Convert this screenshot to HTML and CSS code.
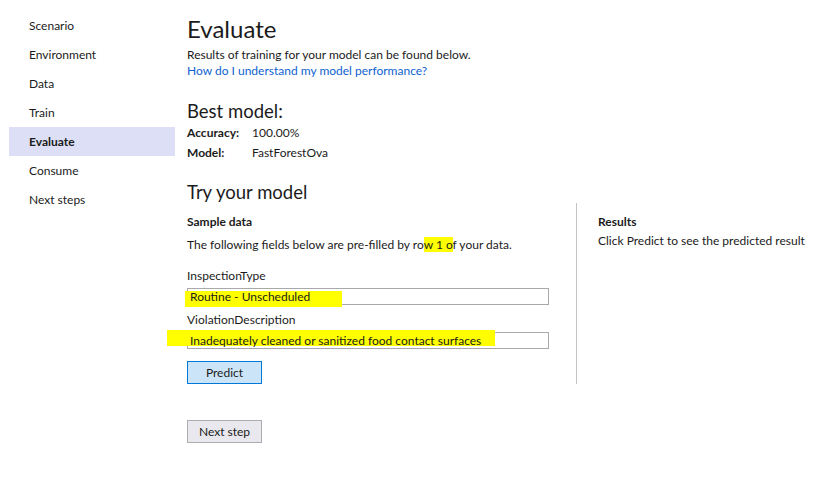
FILE: index.html
```html
<!DOCTYPE html>
<html>
<head>
<meta charset="utf-8">
<link rel="stylesheet" href="styles.css">
</head>
<body>
<div class="app">
  <nav class="sidebar">
    <div class="nav-item">Scenario</div>
    <div class="nav-item">Environment</div>
    <div class="nav-item">Data</div>
    <div class="nav-item">Train</div>
    <div class="nav-item active">Evaluate</div>
    <div class="nav-item">Consume</div>
    <div class="nav-item">Next steps</div>
  </nav>
  <main class="main">
    <h1 class="title">Evaluate</h1>
    <p class="text">Results of training for your model can be found below.</p>
    <a class="link" href="#">How do I understand my model performance?</a>
    <h2 class="subtitle best">Best model:</h2>
    <div class="kv"><span class="key">Accuracy:</span><span class="val">100.00%</span></div>
    <div class="kv"><span class="key">Model:</span><span class="val">FastForestOva</span></div>
    <h2 class="subtitle try">Try your model</h2>
    <div class="columns">
      <section class="sample">
        <div class="bold">Sample data</div>
        <p class="text desc">The following fields below are pre-filled by ro<span class="hl">w 1 o</span>f your data.</p>
        <div class="label first">InspectionType</div>
        <div class="field">
          <span class="marker m1"></span>
          <span class="field-text">Routine - Unscheduled</span>
        </div>
        <div class="label">ViolationDescription</div>
        <div class="field">
          <span class="marker m2"></span>
          <span class="field-text">Inadequately cleaned or sanitized food contact surfaces</span>
        </div>
        <button class="btn predict">Predict</button>
      </section>
      <section class="results">
        <div class="bold">Results</div>
        <p class="text">Click Predict to see the predicted result</p>
      </section>
    </div>
    <button class="btn next">Next step</button>
  </main>
</div>
</body>
</html>
```

FILE: styles.css
```css
* { box-sizing: border-box; }
html, body {
  margin: 0;
  padding: 0;
  background: #ffffff;
}
body {
  font-family: "Lato", "Noto Sans", sans-serif;
  font-size: 12px;
  color: #1b1b1b;
  width: 834px;
  height: 488px;
  overflow: hidden;
}
.app {
  display: flex;
  align-items: flex-start;
}
.sidebar {
  width: 175px;
  padding: 11px 0 0 9px;
  flex: none;
}
.nav-item {
  height: 29px;
  line-height: 29px;
  padding-left: 20px;
  color: #1b1b1b;
}
.nav-item.active {
  background: #dcdff5;
  font-weight: bold;
}
.main {
  margin-left: 12px;
  display: flex;
  flex-direction: column;
  align-items: flex-start;
}
.title {
  margin: 13px 0 0;
  font-size: 24px;
  font-weight: normal;
  line-height: 32px;
  color: #1b1b1b;
}
.text {
  margin: 0;
  line-height: 16px;
}
.title + .text { margin-top: 2px; }
.link {
  color: #0f62d0;
  text-decoration: none;
  line-height: 16px;
}
.subtitle {
  margin: 0;
  font-size: 18.5px;
  font-weight: normal;
  line-height: 24px;
  color: #1b1b1b;
}
.best { margin-top: 20px; }
.kv {
  display: flex;
  line-height: 20px;
}
.key {
  width: 65px;
  font-weight: bold;
}
.try { margin-top: 17px; }
.columns {
  display: flex;
  margin-top: -1px;
}
.sample {
  width: 390px;
  padding-top: 11px;
  border-right: 1px solid #c4c4c4;
  display: flex;
  flex-direction: column;
  align-items: flex-start;
}
.bold {
  font-weight: bold;
  line-height: 16px;
}
.desc { margin-top: 7px; }
.hl { background: #ffff00; }
.label {
  margin-top: 7px;
  line-height: 16px;
}
.label.first { margin-top: 15px; }
.field {
  position: relative;
  margin-top: 4px;
  width: 362px;
  height: 17px;
  border: 1px solid #a9a9a9;
  padding-left: 2px;
  line-height: 15px;
  white-space: nowrap;
}
.marker {
  position: absolute;
  background: #ffff00;
  z-index: 0;
}
.m1 { left: -3px; top: 2px; width: 157px; height: 16px; }
.m2 { left: -21px; top: -3px; width: 328px; height: 16px; }
.field-text {
  position: relative;
  z-index: 1;
}
.btn {
  font-family: inherit;
  font-size: 12px;
  color: #1b1b1b;
  width: 75px;
  height: 23px;
  padding: 0;
  border-radius: 0;
}
.predict {
  margin-top: 12px;
  margin-bottom: 0;
  background: #cce4f7;
  border: 1px solid #0078d7;
}
.results {
  padding: 11px 0 0 21px;
}
.results .text { margin-top: 3px; }
.next {
  margin-top: 36px;
  background: #e9e8ee;
  border: 1px solid #adadad;
}
```
